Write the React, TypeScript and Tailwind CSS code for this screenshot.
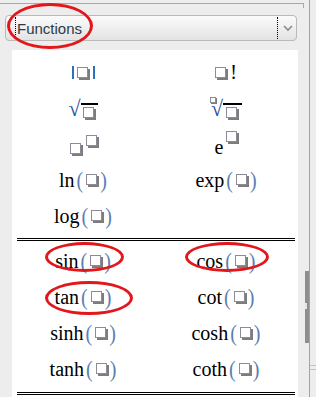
import React from 'react'

const serif = "font-['Liberation_Serif','DejaVu_Serif',serif]"

function Box({ small }: { small?: boolean }) {
  if (small) {
    return <span className="inline-block w-[6px] h-[6px] border border-[#8f8a99] bg-white shadow-[1px_1px_0_#7a7a7a]" />
  }
  return <span className="inline-block w-[11px] h-[11px] border border-[#8f8a99] bg-white shadow-[2px_2px_0_#7d7d7d]" />
}

function Fn({ name }: { name: string }) {
  return (
    <span className={`inline-flex items-center text-[20px] leading-none text-black ${serif}`}>
      <span>{name}</span>
      <span className="ml-[2px] inline-block scale-y-[1.15] text-[#5b7fb3]">(</span>
      <span className="mx-[3px] inline-flex -mt-[2px]">
        <Box />
      </span>
      <span className="inline-block scale-y-[1.15] text-[#5b7fb3]">)</span>
    </span>
  )
}

function Row({ children }: { children: React.ReactNode }) {
  return <div className="grid grid-cols-[142px_144px] h-[36px] items-center justify-items-center">{children}</div>
}

function Separator({ className }: { className?: string }) {
  return <div className={`ml-[5px] w-[278px] h-[3px] border-y border-black ${className ?? ''}`} />
}

function Ellipse({ className }: { className: string }) {
  return <div className={`absolute rounded-[50%] border-[3px] border-[#e3161b] pointer-events-none ${className}`} />
}

export default function App() {
  return (
    <div className="relative w-[316px] h-[397px] overflow-hidden bg-[#ededed] flex">
      <div className="w-[309px] flex flex-col">
        {/* frame top */}
        <div className="mt-[3px] w-[304px] h-[5px] border-t border-r border-[#a9a9a9]" />

        {/* dropdown */}
        <div className="mt-[7px] ml-[5px] w-[292px] h-[26px] rounded-[4px] border border-[#b9b9b9] bg-gradient-to-b from-[#fbfbfb] to-[#e3e3e3] flex items-center">
          <div className="ml-[9px] w-[263px] h-[22px] border-x border-dotted border-black flex items-center">
            <span className="ml-[1px] text-[15px] leading-none text-[#2f3a44] font-['Liberation_Sans',Arial,sans-serif]">Functions</span>
          </div>
          <svg className="ml-[5px]" width="10" height="7" viewBox="0 0 10 7">
            <polyline points="1,1 5,5 9,1" fill="none" stroke="#8a8a8a" strokeWidth="1.6" />
          </svg>
        </div>

        <div className="mt-[9px] flex flex-1">
          {/* panel */}
          <div className="ml-[12px] w-[286px] bg-white pt-[4px]">
            <Row>
              <span className="inline-flex items-center gap-[3px]">
                <span className="inline-block w-[2px] h-[13px] bg-[#2f6fc0]" />
                <Box />
                <span className="ml-[2px] inline-block w-[2px] h-[13px] bg-[#2f6fc0]" />
              </span>
              <span className={`inline-flex items-center text-[20px] leading-none ${serif}`}>
                <span className="mr-[4px] inline-flex"><Box /></span>
                <span>!</span>
              </span>
            </Row>
            <Row>
              <span className={`inline-flex items-end leading-none ${serif}`}>
                <span className="text-[22px] text-[#1d4f96] mb-[-2px]">√</span>
                <span className="border-t-2 border-black pt-[2px] px-[2px] pr-[4px] inline-flex">
                  <Box />
                </span>
              </span>
              <span className={`inline-flex items-end leading-none ${serif}`}>
                <span className="self-start -mt-[1px] -mr-[5px] inline-flex"><Box small /></span>
                <span className="text-[22px] text-[#1d4f96] mb-[-2px]">√</span>
                <span className="border-t-2 border-black pt-[2px] px-[3px] pr-[5px] inline-flex">
                  <Box />
                </span>
              </span>
            </Row>
            <Row>
              <span className="inline-flex items-start">
                <span className="mt-[8px] inline-flex"><Box /></span>
                <span className="ml-[5px] inline-flex"><Box /></span>
              </span>
              <span className={`inline-flex items-start text-[20px] leading-none ${serif}`}>
                <span className="mt-[6px]">e</span>
                <span className="ml-[3px] inline-flex"><Box /></span>
              </span>
            </Row>
            <Row>
              <Fn name="ln" />
              <Fn name="exp" />
            </Row>
            <Row>
              <Fn name="log" />
              <span />
            </Row>
            <Separator className="mt-[4px] mb-[2px]" />
            <Row>
              <Fn name="sin" />
              <Fn name="cos" />
            </Row>
            <Row>
              <Fn name="tan" />
              <Fn name="cot" />
            </Row>
            <Row>
              <Fn name="sinh" />
              <Fn name="cosh" />
            </Row>
            <Row>
              <Fn name="tanh" />
              <Fn name="coth" />
            </Row>
            <Separator className="mt-[5px]" />
          </div>

          {/* scrollbar */}
          <div className="w-[11px] flex justify-end">
            <div className="mt-[221px] w-[4px] h-[72px] bg-[#8e8e8e] flex flex-col">
              <span className="mt-[32px] w-[2px] h-[6px] bg-[#e4e4e4]" />
            </div>
          </div>
        </div>
      </div>

      <div className="w-[1px] bg-[#a3a3a3]" />
      <div className="flex-1 flex flex-col">
        <div className="mt-[365px] h-[5px] border-y border-[#c4c4c4]" />
      </div>

      <Ellipse className="left-[7px] top-[3px] w-[86px] h-[46px]" />
      <Ellipse className="left-[45px] top-[242px] w-[79px] h-[30px]" />
      <Ellipse className="left-[185px] top-[242px] w-[84px] h-[30px]" />
      <Ellipse className="left-[45px] top-[281px] w-[88px] h-[34px]" />
    </div>
  )
}
